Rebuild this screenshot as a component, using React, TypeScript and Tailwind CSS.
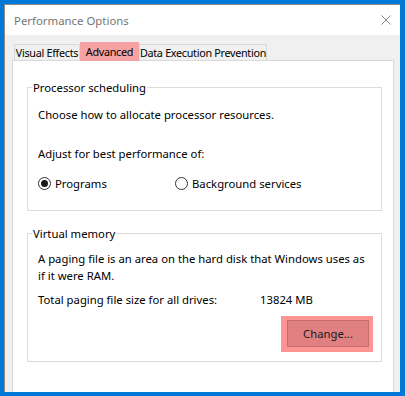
import React from 'react';

// Windows 10 "Performance Options" dialog, Advanced tab

const font = { fontFamily: '"Noto Sans", "Open Sans", sans-serif' };

function Radio({ checked, label }: { checked?: boolean; label: string }) {
  return (
    <label className="flex items-center gap-[4px]">
      <span className="flex h-[13px] w-[13px] items-center justify-center rounded-full border border-[#333] bg-white">
        {checked && <span className="h-[7px] w-[7px] rounded-full bg-[#1a1a1a]" />}
      </span>
      <span>{label}</span>
    </label>
  );
}

function GroupBox({ title, className, children }: { title: string; className?: string; children: React.ReactNode }) {
  return (
    <fieldset className={`border border-[#dcdcdc] pl-[10px] pr-[8px] ${className ?? ''}`}>
      <legend className="-ml-[6px] px-[1px] leading-[15px]">{title}</legend>
      {children}
    </fieldset>
  );
}

export default function App() {
  return (
    <div
      className="h-[396px] w-[405px] bg-[#0078d7] pb-[4px] pl-[4px] pr-[5px] pt-[4px] text-[11.3px] leading-[17px] text-black"
      style={font}
    >
      <div className="flex h-full flex-col overflow-hidden border-l border-t border-[#8a8a8a] bg-[#f0f0f0]">
        {/* title bar */}
        <div className="flex h-[30px] shrink-0 items-center justify-between bg-white pl-[9px] pr-[9px]">
          <span className="text-[11.4px] text-[#767676]">Performance Options</span>
          <svg width="10" height="10" viewBox="0 0 10 10">
            <path d="M0.5 0.5 L9.5 9.5 M9.5 0.5 L0.5 9.5" stroke="#8a8a8a" strokeWidth="1" />
          </svg>
        </div>

        {/* tabs + panel */}
        <div className="flex flex-1 flex-col pl-[7px] pr-[6px] pt-[7px]">
          <div className="flex h-[18px] items-end whitespace-nowrap pl-[2px] text-[10.8px] tracking-[-0.3px]">
            <div className="flex h-[16px] w-[66px] items-center justify-center border border-b-0 border-[#d9d9d9] bg-[#f0f0f0]">
              Visual Effects
            </div>
            <div className="relative z-10 -mb-px flex h-[19px] w-[59px] items-center justify-center bg-[#f6a2a2]">
              Advanced
            </div>
            <div className="flex h-[16px] w-[128px] items-center justify-center border border-b-0 border-[#d9d9d9] bg-[#f0f0f0]">
              Data Execution Prevention
            </div>
          </div>

          <div className="flex-1 border border-b-0 border-[#d9d9d9] bg-white pl-[14px] pr-[11px] pt-[19px]">
            <GroupBox title="Processor scheduling" className="h-[131px]">
              <p className="mt-[11px]">Choose how to allocate processor resources.</p>
              <p className="mt-[22px]">Adjust for best performance of:</p>
              <div className="mt-[13px] flex">
                <div className="w-[137px]">
                  <Radio checked label="Programs" />
                </div>
                <Radio label="Background services" />
              </div>
            </GroupBox>

            <GroupBox title="Virtual memory" className="mt-[15px] h-[136px]">
              <p className="mt-[9px]">
                A paging file is an area on the hard disk that Windows uses as if it were RAM.
              </p>
              <div className="mt-[7px] flex">
                <span className="w-[222px]">Total paging file size for all drives:</span>
                <span>13824 MB</span>
              </div>
              <div className="mt-[8px] flex justify-end">
                <div className="bg-[#ff9494] pb-[5px] pl-[6px] pr-[4px] pt-[4px]">
                  <button
                    type="button"
                    className="flex h-[27px] w-[82px] items-center justify-center border border-[#c46d6d] bg-[#e08080] text-[#1a1a1a]"
                  >
                    Change...
                  </button>
                </div>
              </div>
            </GroupBox>
          </div>
        </div>
      </div>
    </div>
  );
}
